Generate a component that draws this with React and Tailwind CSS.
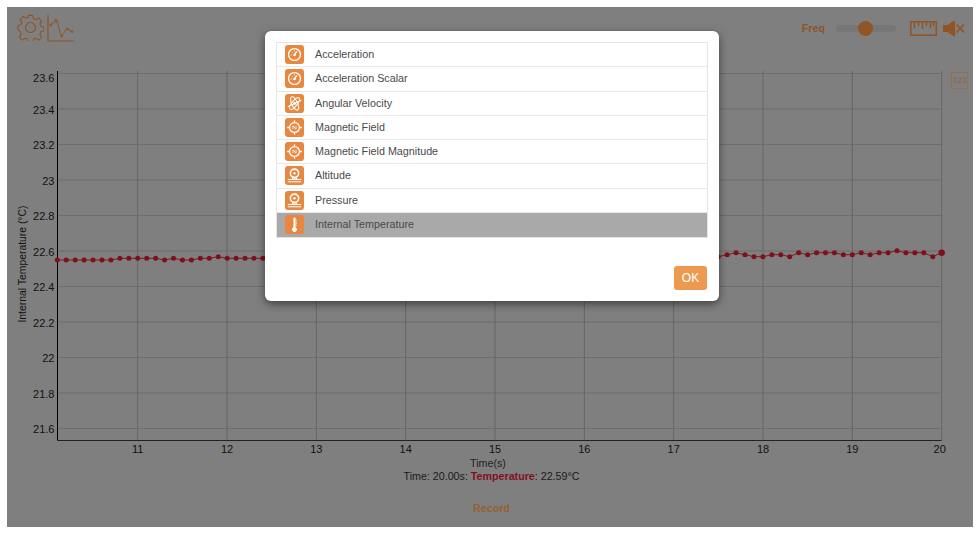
import React from 'react';

const sans = { fontFamily: '"Liberation Sans", Arial, sans-serif' };

const yTicks = ['23.6', '23.4', '23.2', '23', '22.8', '22.6', '22.4', '22.2', '22', '21.8', '21.6'];
const xTicks = [11, 12, 13, 14, 15, 16, 17, 18, 19, 20];

// chart is drawn in page coordinates minus the panel offset
const X0 = 50.5;
const X1 = 934.5;
const Y0 = 64;
const Y1 = 433.5;
const tickY = (i) => 66.5 + i * 35.5;
const tickX = (i) => 130.7 + i * 89.33;

const seriesLeft = [260, 260, 260, 260, 260, 260, 260, 258.3, 258.3, 258.3, 258.3, 258.3, 260, 258.3, 260, 260, 258.3, 258.3, 256.7, 258.3, 258.3, 258.3, 258.3, 258.3];
const seriesRight = [256.7, 254.7, 252.7, 254.7, 256.7, 256.7, 254.7, 254.7, 256.7, 252.7, 254.7, 252.7, 252.7, 252.7, 254.7, 254.7, 252.7, 254.7, 252.7, 252.7, 250.7, 252.7, 252.7, 252.7, 256.7, 252.7];

const points = [
  ...seriesLeft.map((y, i) => [50.3 + i * 8.94, y - 7]),
  ...seriesRight.map((y, i) => [934.7 - (seriesRight.length - 1 - i) * 8.94, y - 7]),
];

const Gear = () => (
  <svg width="27" height="27" viewBox="0 0 30 30" fill="none" stroke="#8f5526" strokeWidth="1.2" strokeLinejoin="round">
    <circle cx="15" cy="15" r="5.5" />
    <path d="M12.5 1.5h5l.8 3.8 2.6 1.1 3.2-2 3.4 3.5-2 3.1 1.1 2.7 3.4.8v4.4l-3.4.8-1.1 2.7 2 3.1-3.4 3.5-3.2-2-2.6 1.1-.8 3.6h-5l-.8-3.6-2.6-1.1-3.2 2-3.4-3.5 2-3.1-1.1-2.7L1 17.2v-4.4l3.4-.8 1.1-2.7-2-3.1 3.4-3.5 3.2 2 2.6-1.1z" />
  </svg>
);

const ChartIcon = () => (
  <svg width="28" height="28" viewBox="0 0 28 28" fill="none" stroke="#8f5526" strokeWidth="1">
    <path d="M1 1v26h26" strokeWidth="1.2" />
    <path d="M3.7 11L9 6.7C11 7 12 18 14.7 22C16 22 18 15 20.3 15L25.3 17.7" />
    <circle cx="3.7" cy="11" r="1" />
    <circle cx="9" cy="6.7" r="1.3" />
    <circle cx="14.7" cy="22" r="1" />
    <circle cx="20.3" cy="15" r="1" />
    <circle cx="25.3" cy="17.7" r="1" />
  </svg>
);

const Ruler = () => (
  <svg width="27" height="15" viewBox="0 0 27 15" fill="none" stroke="#8f5526">
    <rect x="0.75" y="0.75" width="25.5" height="13.5" strokeWidth="1.5" />
    <path d="M4.5 1v6M8.5 1v4M12.5 1v7M16.5 1v4M20.5 1v6M23.5 1v4" strokeWidth="1.5" />
  </svg>
);

const Speaker = () => (
  <svg width="22" height="17" viewBox="0 0 22 17" fill="#8f5526">
    <path d="M0 5h4.5L12 0v17L4.5 12H0z" />
    <path d="M13.5 4.5l7.5 8M21 4.5l-7.5 8" fill="none" stroke="#8f5526" strokeWidth="1.7" />
  </svg>
);

const Gauge = () => (
  <svg width="19" height="19" viewBox="0 0 18 18" fill="none" stroke="#fff">
    <circle cx="9" cy="9" r="6.6" strokeWidth="1.5" />
    <path d="M9 9.5l2.6-4" strokeWidth="1.7" />
    <circle cx="9" cy="9.6" r="1.4" fill="#fff" stroke="none" />
    <path d="M5 9.5h1.2M9 4.4v1.2M6 6.2l.7.7" strokeWidth="0.9" />
  </svg>
);

const Atom = () => (
  <svg width="19" height="19" viewBox="0 0 18 18" fill="none" stroke="#fff" strokeWidth="1.2">
    <ellipse cx="9" cy="9" rx="3.2" ry="8" transform="rotate(-25 9 9)" />
    <ellipse cx="9" cy="9" rx="3" ry="8" transform="rotate(38 9 9)" />
    <path d="M1.5 12.5l15-7" />
    <circle cx="9" cy="9" r="1.6" fill="#fff" stroke="none" />
  </svg>
);

const Compass = () => (
  <svg width="19" height="19" viewBox="0 0 18 18" fill="none" stroke="#fff">
    <circle cx="9" cy="9" r="5.5" strokeWidth="1.4" />
    <path d="M9 0.8v2.4M9 14.8v2.4M0.8 9h2.4M14.8 9h2.4" strokeWidth="1.4" />
    <path d="M7.3 11V7l3.4 4V7" strokeWidth="0.9" />
  </svg>
);

const Barometer = () => (
  <svg width="19" height="19" viewBox="0 0 18 18" fill="none" stroke="#fff">
    <circle cx="9" cy="6.5" r="4.6" strokeWidth="1.7" />
    <circle cx="9" cy="6.5" r="1.3" fill="#fff" stroke="none" />
    <path d="M6.8 11v2h4.4v-2" strokeWidth="1.2" />
    <path d="M1.5 13.5h15M1.5 16h15" strokeWidth="1.3" />
  </svg>
);

const Thermo = () => (
  <svg width="19" height="19" viewBox="0 0 18 18" fill="none">
    <path d="M7.8 2.4a1.2 1.2 0 0 1 2.4 0v9.8a2.7 2.7 0 1 1-2.4 0z" fill="#fff" />
    <path d="M10.4 4h1.4M10.4 6h1.4M10.4 8h1.4M10.4 10h1.4" stroke="#fff" strokeWidth="0.7" />
  </svg>
);

const rows = [
  { label: 'Acceleration', icon: <Gauge /> },
  { label: 'Acceleration Scalar', icon: <Gauge /> },
  { label: 'Angular Velocity', icon: <Atom /> },
  { label: 'Magnetic Field', icon: <Compass /> },
  { label: 'Magnetic Field Magnitude', icon: <Compass /> },
  { label: 'Altitude', icon: <Barometer /> },
  { label: 'Pressure', icon: <Barometer /> },
  { label: 'Internal Temperature', icon: <Thermo />, selected: true },
];

const Chart = () => (
  <svg width="966" height="463" className="block shrink-0" style={sans}>
    {yTicks.map((t, i) => (
      <g key={t}>
        <line x1={X0} x2={X1} y1={tickY(i)} y2={tickY(i)} stroke="#6e6e6e" />
        <text x={X0 - 3} y={tickY(i) + (i === 0 ? 8 : 4.5)} textAnchor="end" fontSize="11" fill="#111">{t}</text>
      </g>
    ))}
    {xTicks.map((t, i) => (
      <g key={t}>
        <line x1={tickX(i)} x2={tickX(i)} y1={Y0} y2={Y1} stroke="#666" />
        <text x={tickX(i) - (i === 9 ? 2 : 0)} y={Y1 + 12} textAnchor="middle" fontSize="11" fill="#111">{t}</text>
      </g>
    ))}
    <line x1={X0} x2={X0} y1={Y0} y2={Y1} stroke="#000" strokeWidth="1" />
    <line x1={X0} x2={X1} y1={Y1} y2={Y1} stroke="#222" strokeWidth="1" />
    <polyline points={points.map((p) => p.join(',')).join(' ')} fill="none" stroke="#7f1a22" strokeWidth="1" />
    {points.map((p, i) => (
      <circle key={i} cx={p[0]} cy={p[1]} r={i === points.length - 1 ? 3.2 : 2.5} fill="#7d1019" />
    ))}
    <text x="481" y="460" textAnchor="middle" fontSize="10.7" fill="#222">Time(s)</text>
    <text transform="translate(19 257) rotate(-90)" textAnchor="middle" fontSize="10.4" fill="#111">Internal Temperature (°C)</text>
  </svg>
);

const App = () => (
  <div className="relative w-[980px] h-[534px] bg-white p-[7px] overflow-hidden" style={sans}>
    <div className="relative w-[966px] h-[520px] bg-[#7f7f7f] flex flex-col">
      <div className="absolute left-[10px] top-[7px] flex items-start gap-[3px]">
        <Gear />
        <ChartIcon />
      </div>
      <div className="absolute right-[8px] top-[13px] h-[17px] flex items-center">
        <span className="text-[10.7px] font-bold text-[#8f5526] mr-[11px]">Freq</span>
        <div className="relative w-[60px] h-[7px] rounded-full bg-[#767676] mr-[14px]">
          <div className="absolute left-[22px] top-[-4px] w-[15px] h-[15px] rounded-full bg-[#8f5526]" />
        </div>
        <Ruler />
        <div className="ml-[6px] flex"><Speaker /></div>
      </div>
      <div className="absolute left-[944px] top-[65px] w-[17px] h-[17px] border border-[#95704c] flex items-center justify-center text-[9px] leading-none text-[#8f6238] font-['Liberation_Serif']">123</div>
      <Chart />
      <div className="text-center text-[10.7px] leading-[13px] text-[#1a1a1a] pl-[3px]">
        Time: 20.00s: <span className="font-bold text-[#7f111b]">Temperature</span>: 22.59°C
      </div>
      <div className="text-center text-[10.7px] leading-[13px] font-bold text-[#95602f] mt-[19px] pl-[3px]">Record</div>
    </div>

    <div className="absolute left-[265px] top-[31px] w-[454px] h-[270px] bg-white rounded-md shadow-[0_3px_9px_rgba(0,0,0,0.5)] p-[11px] flex flex-col">
      <div className="border border-[#e4e4e4]">
        {rows.map((r) => (
          <div
            key={r.label}
            className={`flex items-center h-[24.25px] pl-[8px] border-b border-[#e8e8e8] last:border-b-0 ${r.selected ? 'bg-[#a9a9a9]' : 'bg-white'}`}
          >
            <div className="w-[19px] h-[19px] rounded-[3px] bg-[#e8873f] flex items-center justify-center shrink-0">
              <div className="scale-[0.85] flex">{r.icon}</div>
            </div>
            <span className="ml-[11px] mb-[0.9px] text-[10.75px] text-[#4a4a4a]">{r.label}</span>
          </div>
        ))}
      </div>
      <div className="flex justify-end mt-[28px] mr-[1px]">
        <button className="w-[33px] h-[24px] rounded-[3px] bg-[#ec9a4f] text-white text-[12px]">OK</button>
      </div>
    </div>
  </div>
);

export default App;
